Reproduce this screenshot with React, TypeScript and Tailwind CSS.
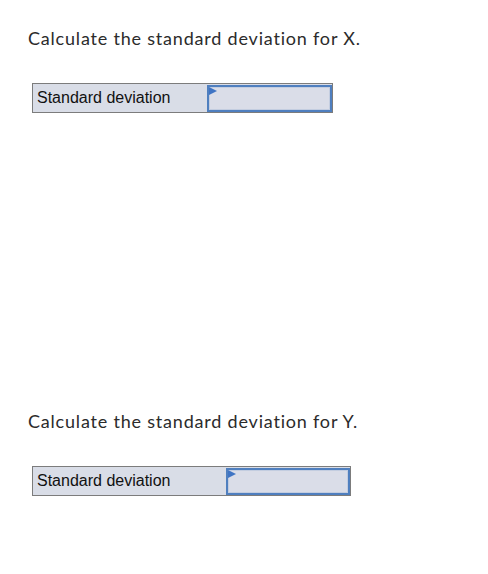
export default function App() {
  return (
    <div className="min-h-[574px] w-[488px] bg-white pl-[28px] pt-[26px] text-[#2b2b2b]">
      <Question label="Calculate the standard deviation for X." labelWidth={174} inputWidth={125} />
      <div className="mt-[296px]">
        <Question label="Calculate the standard deviation for Y." labelWidth={193} inputWidth={124} />
      </div>
    </div>
  );
}

function Question({
  label,
  labelWidth,
  inputWidth,
}: {
  label: string;
  labelWidth: number;
  inputWidth: number;
}) {
  return (
    <div>
      <p className="font-['Lato',sans-serif] text-[18px] leading-[24px] tracking-[0.8px]">{label}</p>
      <div className="ml-[4px] mt-[33px] flex h-[30px] w-fit border border-[#7c7c7c] bg-[#d9dde7]">
        <div
          className="flex items-center pl-[4px] font-['Liberation_Sans',Arial,sans-serif] text-[16px] text-[#111]"
          style={{ width: labelWidth }}
        >
          Standard deviation
        </div>
        <div className="pt-[1px]" style={{ width: inputWidth }}>
          <div className="relative h-full border-2 border-[#4f7fbf] bg-[#dadde8] shadow-[inset_0_0_0_1px_#c3cde0]">
            <svg className="absolute left-[0px] top-[0px]" width="8" height="8" viewBox="0 0 8 8">
              <polygon points="0,0 8,4 0,8" fill="#3f74c4" />
            </svg>
          </div>
        </div>
      </div>
    </div>
  );
}
